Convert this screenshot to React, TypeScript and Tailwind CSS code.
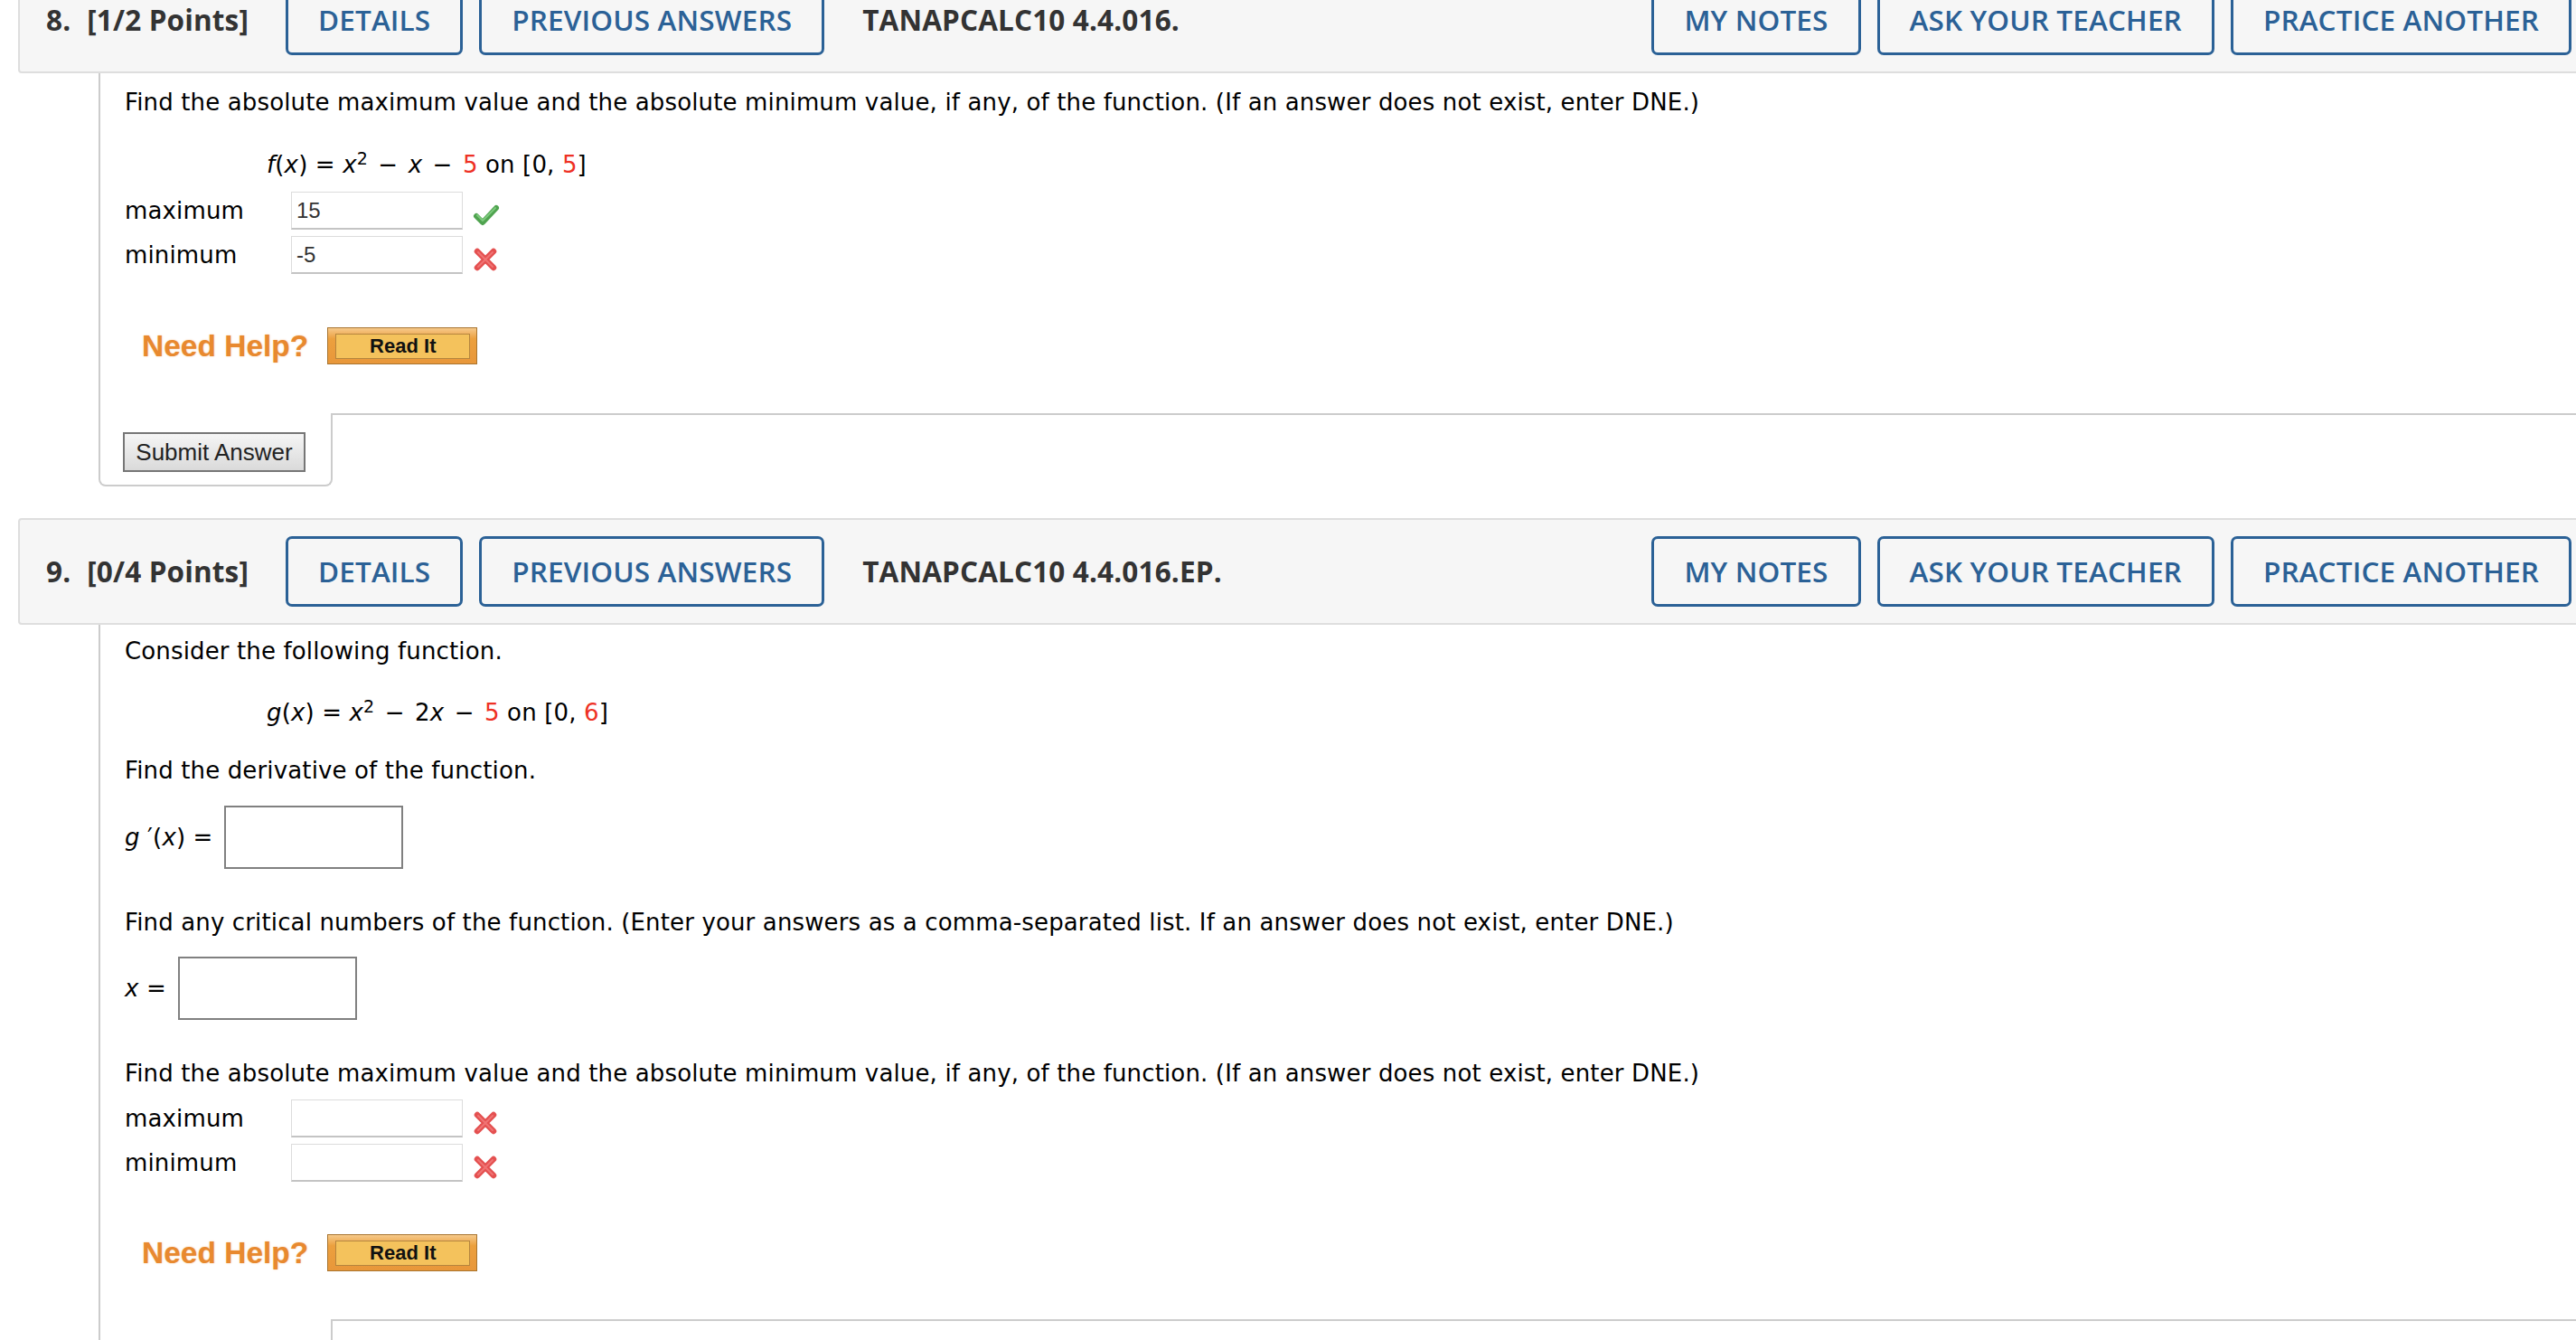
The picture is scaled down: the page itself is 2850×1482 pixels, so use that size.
import React from "react";

type HeaderProps = {
  num: string;
  points: string;
  code: string;
};

function HeaderButton({ children }: { children: React.ReactNode }) {
  return (
    <button className="h-[78px] rounded-[7px] border-[3px] border-[#2b6196] px-[33px] font-semibold text-[#2b6196]">
      {children}
    </button>
  );
}

function QuestionHeader({ num, points, code }: HeaderProps) {
  return (
    <div className="flex h-[118px] w-[2840px] items-center rounded-[4px] border-2 border-[#dedede] bg-[#f6f6f6] pl-[29px] pr-[13px] font-['Open_Sans',sans-serif] text-[31.5px]">
      <span className="font-bold text-[#333]">{num}</span>
      <span className="ml-[18px] font-bold text-[#333]">[{points} Points]</span>
      <div className="ml-[41px] flex gap-[18px]">
        <HeaderButton>DETAILS</HeaderButton>
        <HeaderButton>PREVIOUS ANSWERS</HeaderButton>
      </div>
      <span className="ml-[42px] font-bold text-[#333]">{code}</span>
      <div className="ml-auto flex gap-[18px]">
        <HeaderButton>MY NOTES</HeaderButton>
        <HeaderButton>ASK YOUR TEACHER</HeaderButton>
        <HeaderButton>PRACTICE ANOTHER</HeaderButton>
      </div>
    </div>
  );
}

function CheckIcon() {
  return (
    <svg width="30" height="26" viewBox="0 0 30 26" className="shrink-0">
      <path
        d="M4 14 L11 21 L26 5"
        fill="none"
        stroke="#4fa34f"
        strokeWidth="6"
        strokeLinecap="round"
        strokeLinejoin="round"
      />
      <path
        d="M5 13 L11 19 L25 5"
        fill="none"
        stroke="#7cc97c"
        strokeWidth="2"
        strokeLinecap="round"
        strokeLinejoin="round"
      />
    </svg>
  );
}

function CrossIcon() {
  return (
    <svg width="28" height="28" viewBox="0 0 28 28" className="shrink-0">
      <path
        d="M5 5 L23 23 M23 5 L5 23"
        fill="none"
        stroke="#e45050"
        strokeWidth="6.5"
        strokeLinecap="round"
      />
      <path
        d="M6 6 L22 22 M22 6 L6 22"
        fill="none"
        stroke="#f07474"
        strokeWidth="2"
        strokeLinecap="round"
      />
    </svg>
  );
}

function AnswerRow({
  label,
  value,
  ok,
  className = "",
}: {
  label: string;
  value: string;
  ok: boolean;
  className?: string;
}) {
  return (
    <div className={`flex items-center ${className}`}>
      <span className="w-[184px]">{label}</span>
      <div className="flex h-[42px] w-[190px] items-center border border-[#dcdcdc] border-b-2 border-b-[#c4c4c4] bg-white pl-[5px] font-['Liberation_Sans',Arial,sans-serif] text-[24px] tracking-normal text-[#333]">
        {value}
      </div>
      <div className="ml-[11px] mt-[10px]">{ok ? <CheckIcon /> : <CrossIcon />}</div>
    </div>
  );
}

function NeedHelp({ className = "" }: { className?: string }) {
  return (
    <div className={`flex items-center pl-[19px] font-['Liberation_Sans',Arial,sans-serif] tracking-normal ${className}`}>
      <span className="text-[33.5px] font-bold text-[#e8892f] [text-shadow:0_0_2px_rgba(232,137,47,0.45)]">
        Need Help?
      </span>
      <div className="ml-[21px] h-[41px] w-[166px] border border-[#a8742f] bg-[linear-gradient(#f6c98a,#eca03e_30%,#e8973a)] pb-[5px] pl-[8px] pr-[7px] pt-[6px]">
        <div className="flex h-full items-center justify-center border border-[#b5853e] bg-[#f4c25c] text-[22px] font-bold text-[#111]">
          Read It
        </div>
      </div>
    </div>
  );
}

function SubmitTab({ showButton = true }: { showButton?: boolean }) {
  return (
    <div className="relative -mt-[2px] ml-[89px] h-[81px] w-[259px] rounded-b-[8px] border-x-2 border-b-2 border-[#cccccc] bg-white pl-[25px] pt-[21px]">
      {showButton && (
        <button className="h-[44px] w-[202px] border-2 border-[#767676] bg-[linear-gradient(#f5f5f5,#dadada)] font-['Liberation_Sans',Arial,sans-serif] text-[26px] tracking-normal text-[#222]">
          Submit Answer
        </button>
      )}
    </div>
  );
}

const red = "text-[#ee3124]";

function Minus() {
  return <span className="mx-[3px]">−</span>;
}

export default function App() {
  return (
    <div className="h-[1482px] w-[2850px] overflow-hidden bg-white">
      <div className="-mt-[37px] ml-[20px] font-['DejaVu_Sans',Verdana,sans-serif] text-[26px] leading-[36px] tracking-[0.14px] text-black">
        {/* Question 8 */}
        <QuestionHeader num="8." points="1/2" code="TANAPCALC10 4.4.016." />
        <div className="ml-[89px] border-b-2 border-l-2 border-[#cccccc] pb-[54px] pl-[27px] pt-[14px]">
          <p>
            Find the absolute maximum value and the absolute minimum value, if any, of the function. (If an answer does not exist, enter DNE.)
          </p>
          <p className="ml-[157px] mt-[33px]">
            <i>f</i>(<i>x</i>) = <i>x</i>
            <sup className="text-[19px]">2</sup> <Minus /> <i>x</i> <Minus /> <span className={red}>5</span> on [0,{" "}
            <span className={red}>5</span>]
          </p>
          <AnswerRow className="mt-[12px]" label="maximum" value="15" ok />
          <AnswerRow className="mt-[7px]" label="minimum" value="-5" ok={false} />
          <NeedHelp className="mt-[59px]" />
        </div>
        <SubmitTab />

        {/* Question 9 */}
        <div className="mt-[35px]">
          <QuestionHeader num="9." points="0/4" code="TANAPCALC10 4.4.016.EP." />
        </div>
        <div className="ml-[89px] border-b-2 border-l-2 border-[#cccccc] pb-[53px] pl-[27px] pt-[11px]">
          <p>Consider the following function.</p>
          <p className="ml-[157px] mt-[32px]">
            <i>g</i>(<i>x</i>) = <i>x</i>
            <sup className="text-[19px]">2</sup> <Minus /> 2<i>x</i> <Minus /> <span className={red}>5</span> on [0,{" "}
            <span className={red}>6</span>]
          </p>
          <p className="mt-[28px]">Find the derivative of the function.</p>
          <div className="mt-[21px] flex items-center">
            <span>
              <i>g</i> ′(<i>x</i>) =
            </span>
            <div className="ml-[12px] h-[70px] w-[198px] border-2 border-[#808080] bg-white" />
          </div>
          <p className="mt-[41px]">
            Find any critical numbers of the function. (Enter your answers as a comma-separated list. If an answer does not exist, enter DNE.)
          </p>
          <div className="mt-[20px] flex items-center">
            <span>
              <i>x</i> =
            </span>
            <div className="ml-[13px] h-[70px] w-[198px] border-2 border-[#808080] bg-white" />
          </div>
          <p className="mt-[41px]">
            Find the absolute maximum value and the absolute minimum value, if any, of the function. (If an answer does not exist, enter DNE.)
          </p>
          <AnswerRow className="mt-[11px]" label="maximum" value="" ok={false} />
          <AnswerRow className="mt-[7px]" label="minimum" value="" ok={false} />
          <NeedHelp className="mt-[58px]" />
        </div>
        <SubmitTab showButton={false} />
      </div>
    </div>
  );
}
